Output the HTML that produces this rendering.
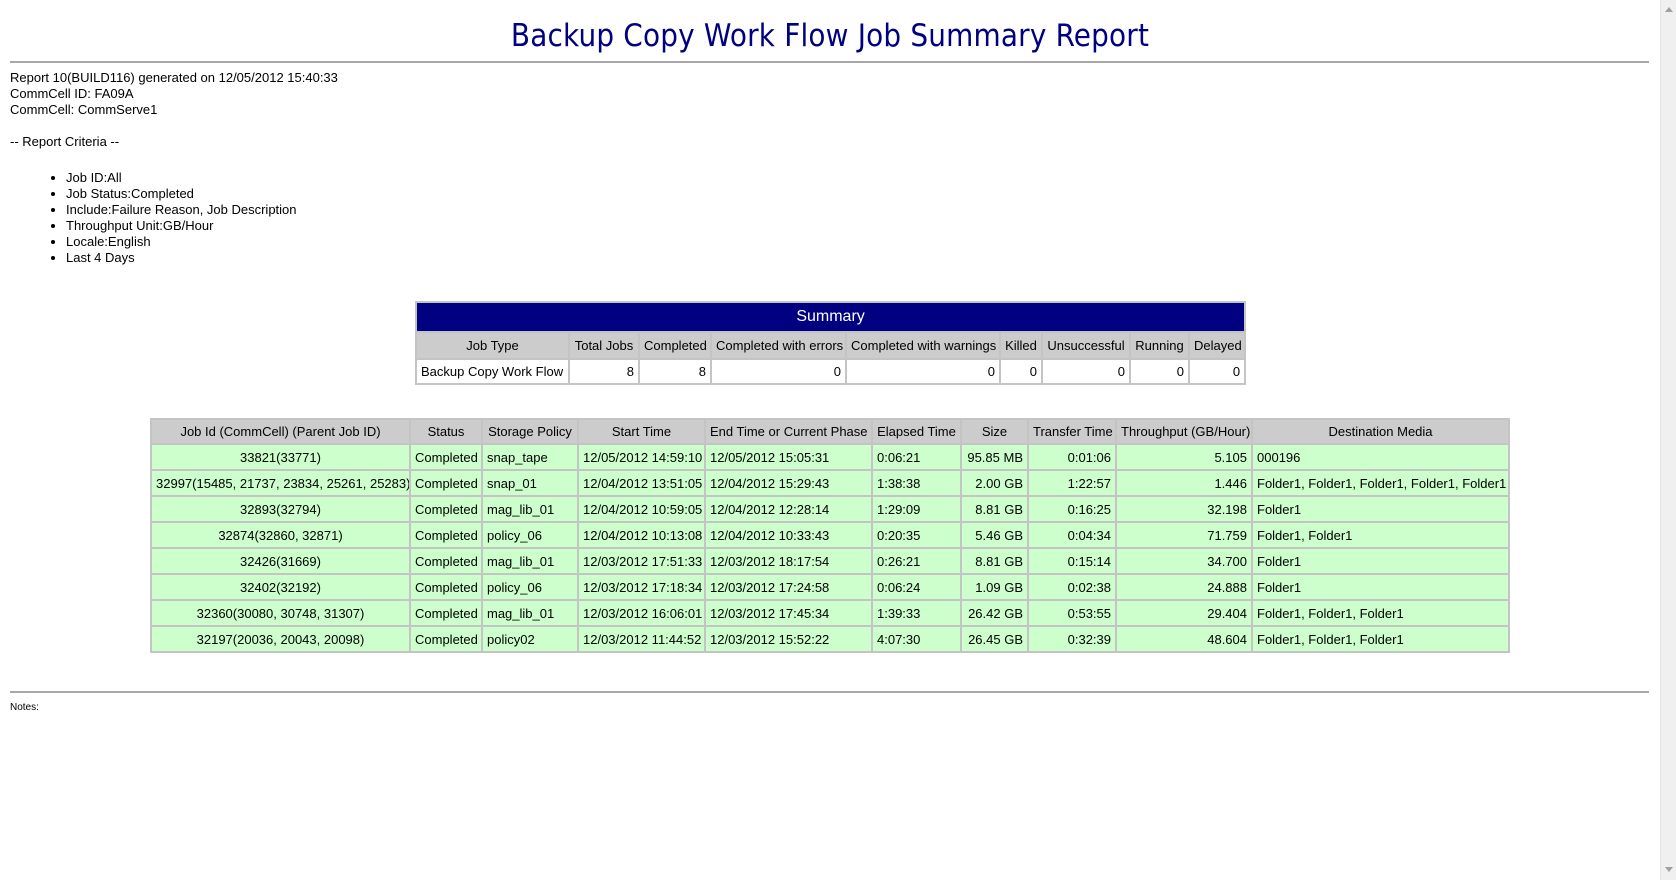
<!DOCTYPE html>
<html><head><meta charset="utf-8"><style>
html,body{margin:0;padding:0;background:#fff;width:1676px;height:880px;overflow:hidden;font-family:"Liberation Sans",Arial,sans-serif;font-size:13px;color:#000;position:relative}
.t{position:absolute;left:0;width:1660px;top:18px;text-align:center;color:#000080;font-family:"DejaVu Sans Condensed","DejaVu Sans",sans-serif;font-size:31px;letter-spacing:0.2px}
.hr{position:absolute;left:10px;width:1639px;height:2px;background:#a8a8a8}
.info{position:absolute;left:10px;top:70px;line-height:16px}
ul{margin:0;padding:0;position:absolute;left:66px;top:170px;line-height:16px}
ul li{list-style:disc}
table{position:absolute;border-collapse:collapse;table-layout:fixed}
td,th{border:2px solid #c4c4c4;padding:0 4px;white-space:nowrap;overflow:hidden;font-weight:normal}
.hd{background:#cccccc;text-align:center}
.r{text-align:right}.c{text-align:center}
#s{left:415px;top:301px;width:829px}
#s .ttl{background:#000080;color:#fff;font-size:16px;height:28px;text-align:center;border-color:#c4c4c4}
#s .hd{height:25px}
#s td{height:23px}
#m{left:150px;top:418px;width:1358px}
#m .hd{height:23px}
#m td{height:24px;background:#ccffcc}
.sb{position:absolute;left:1660px;top:0;width:16px;height:880px;background:#f0f0f0;border-left:1px solid #e4e4e4}
</style></head><body>
<div class="t">Backup Copy Work Flow Job Summary Report</div>
<div class="hr" style="top:61px"></div>
<div class="info">Report 10(BUILD116) generated on 12/05/2012 15:40:33<br>CommCell ID: FA09A<br>CommCell: CommServe1<br><br>-- Report Criteria --</div>
<ul><li>Job ID:All</li><li>Job Status:Completed</li><li>Include:Failure Reason, Job Description</li><li>Throughput Unit:GB/Hour</li><li>Locale:English</li><li>Last 4 Days</li></ul>
<table id="s">
<colgroup><col style="width:153px"><col style="width:70px"><col style="width:72px"><col style="width:135px"><col style="width:154px"><col style="width:42px"><col style="width:88px"><col style="width:59px"><col style="width:56px"></colgroup>
<tr><th class="ttl" colspan="9">Summary</th></tr>
<tr><th class="hd">Job Type</th><th class="hd">Total Jobs</th><th class="hd">Completed</th><th class="hd">Completed with errors</th><th class="hd">Completed with warnings</th><th class="hd">Killed</th><th class="hd">Unsuccessful</th><th class="hd">Running</th><th class="hd">Delayed</th></tr>
<tr><td>Backup Copy Work Flow</td><td class="r">8</td><td class="r">8</td><td class="r">0</td><td class="r">0</td><td class="r">0</td><td class="r">0</td><td class="r">0</td><td class="r">0</td></tr>
</table>
<table id="m">
<colgroup><col style="width:259px"><col style="width:72px"><col style="width:96px"><col style="width:127px"><col style="width:167px"><col style="width:89px"><col style="width:67px"><col style="width:88px"><col style="width:136px"><col style="width:257px"></colgroup>
<tr><th class="hd">Job Id (CommCell) (Parent Job ID)</th><th class="hd">Status</th><th class="hd">Storage Policy</th><th class="hd">Start Time</th><th class="hd">End Time or Current Phase</th><th class="hd">Elapsed Time</th><th class="hd">Size</th><th class="hd">Transfer Time</th><th class="hd">Throughput (GB/Hour)</th><th class="hd">Destination Media</th></tr>
<tr><td class="c">33821(33771)</td><td>Completed</td><td>snap_tape</td><td>12/05/2012 14:59:10</td><td>12/05/2012 15:05:31</td><td>0:06:21</td><td class="r">95.85 MB</td><td class="r">0:01:06</td><td class="r">5.105</td><td>000196</td></tr>
<tr><td class="c">32997(15485, 21737, 23834, 25261, 25283)</td><td>Completed</td><td>snap_01</td><td>12/04/2012 13:51:05</td><td>12/04/2012 15:29:43</td><td>1:38:38</td><td class="r">2.00 GB</td><td class="r">1:22:57</td><td class="r">1.446</td><td>Folder1, Folder1, Folder1, Folder1, Folder1</td></tr>
<tr><td class="c">32893(32794)</td><td>Completed</td><td>mag_lib_01</td><td>12/04/2012 10:59:05</td><td>12/04/2012 12:28:14</td><td>1:29:09</td><td class="r">8.81 GB</td><td class="r">0:16:25</td><td class="r">32.198</td><td>Folder1</td></tr>
<tr><td class="c">32874(32860, 32871)</td><td>Completed</td><td>policy_06</td><td>12/04/2012 10:13:08</td><td>12/04/2012 10:33:43</td><td>0:20:35</td><td class="r">5.46 GB</td><td class="r">0:04:34</td><td class="r">71.759</td><td>Folder1, Folder1</td></tr>
<tr><td class="c">32426(31669)</td><td>Completed</td><td>mag_lib_01</td><td>12/03/2012 17:51:33</td><td>12/03/2012 18:17:54</td><td>0:26:21</td><td class="r">8.81 GB</td><td class="r">0:15:14</td><td class="r">34.700</td><td>Folder1</td></tr>
<tr><td class="c">32402(32192)</td><td>Completed</td><td>policy_06</td><td>12/03/2012 17:18:34</td><td>12/03/2012 17:24:58</td><td>0:06:24</td><td class="r">1.09 GB</td><td class="r">0:02:38</td><td class="r">24.888</td><td>Folder1</td></tr>
<tr><td class="c">32360(30080, 30748, 31307)</td><td>Completed</td><td>mag_lib_01</td><td>12/03/2012 16:06:01</td><td>12/03/2012 17:45:34</td><td>1:39:33</td><td class="r">26.42 GB</td><td class="r">0:53:55</td><td class="r">29.404</td><td>Folder1, Folder1, Folder1</td></tr>
<tr><td class="c">32197(20036, 20043, 20098)</td><td>Completed</td><td>policy02</td><td>12/03/2012 11:44:52</td><td>12/03/2012 15:52:22</td><td>4:07:30</td><td class="r">26.45 GB</td><td class="r">0:32:39</td><td class="r">48.604</td><td>Folder1, Folder1, Folder1</td></tr>
</table>
<div class="hr" style="top:691px"></div>
<div style="position:absolute;left:10px;top:702px;font-size:10px">Notes:</div>
<div class="sb"><svg width="16" height="880" style="position:absolute;left:0;top:0"><path d="M4 12 L8 7 L12 12 Z" fill="#a0a0a0"/><path d="M4 867 L8 872 L12 867 Z" fill="#a0a0a0"/></svg></div>
</body></html>
